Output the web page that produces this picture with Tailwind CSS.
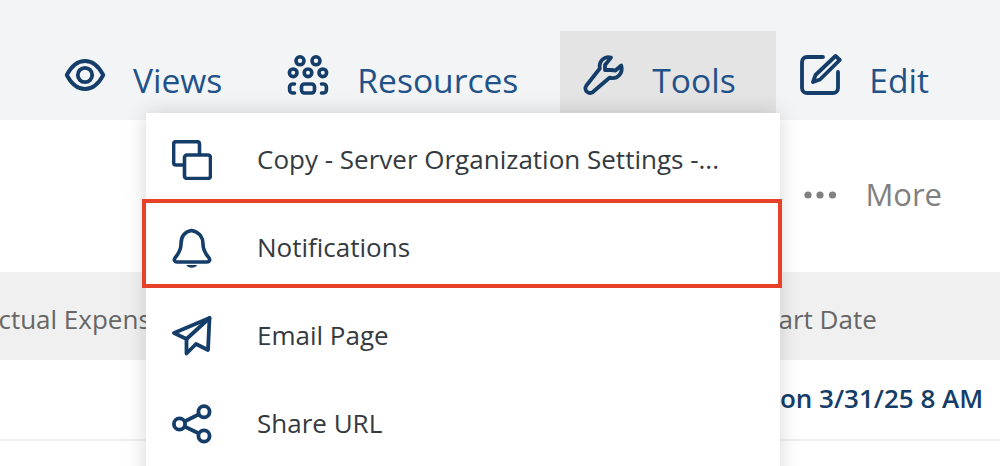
<!DOCTYPE html>
<html lang="en">
<head>
  <meta charset="UTF-8" />
  <title>Tools menu</title>
  <script src="https://cdn.jsdelivr.net/npm/@tailwindcss/browser@4"></script>
</head>
<body class="bg-white overflow-hidden font-['Open_Sans','Noto_Sans',sans-serif]">
  <div class="relative w-[1000px] h-[466px] overflow-hidden">
    <!-- top nav -->
    <nav class="h-[120px] bg-[#f3f4f6] flex justify-end pr-[29px] pt-[31px] text-[33.6px] text-[#1f5288]">
      <a class="h-[89px] pl-6 pr-[42px] flex items-start gap-[28px]">
        <svg class="w-10 h-10 mt-6 shrink-0 overflow-visible" viewBox="0 0 40 40" fill="none" stroke="#153d69" stroke-width="3.8" stroke-linejoin="round">
          <path d="M1.7 20C7 10 13 6 20 6C27 6 33 10 38.3 20C33 30 27 34 20 34C13 34 7 30 1.7 20Z" />
          <circle cx="20" cy="20" r="7.2" />
        </svg>
        <span class="leading-[40px] mt-[29px]">Views</span>
      </a>
      <a class="h-[89px] pl-6 pr-[42px] flex items-start gap-[29px]">
        <svg class="w-10 h-10 mt-6 shrink-0 overflow-visible" viewBox="0 0 40 40" fill="none" stroke="#153d69" stroke-width="3.6" stroke-linecap="round">
          <circle cx="12" cy="5.8" r="4" />
          <circle cx="28" cy="5.8" r="4" />
          <circle cx="5.2" cy="17.8" r="3.8" />
          <circle cx="20" cy="17.8" r="3.8" />
          <circle cx="34.8" cy="17.8" r="3.8" />
          <rect x="13.5" y="29" width="13" height="9" rx="3" />
          <path d="M6.5 29H4.5A3 3 0 0 0 1.6 32V35A3 3 0 0 0 4.5 38H6.5" />
          <path d="M33.5 29H35.5A3 3 0 0 1 38.4 32V35A3 3 0 0 1 35.5 38H33.5" />
        </svg>
        <span class="leading-[40px] mt-[29px]">Resources</span>
      </a>
      <a class="h-[89px] w-[216px] pl-6 bg-[#e4e4e4] flex items-start gap-[28px]">
        <svg class="w-10 h-10 mt-6 shrink-0 overflow-visible" viewBox="0 0 40 40" fill="none" stroke="#153d69" stroke-width="3.8" stroke-linecap="round" stroke-linejoin="round">
          <path d="M27 15H21V10L27 2.6C21 0.6 14.5 5.5 15.8 13.5L2.6 30.2C0.6 33 1.3 35.8 3.5 37.2C5.7 38.5 8.3 38.2 10 36L25.5 22.7C33.5 25 39.5 18 37.2 10.5L31.5 15.5Z" />
        </svg>
        <span class="leading-[40px] mt-[29px]">Tools</span>
      </a>
      <a class="h-[89px] pl-6 pr-[42px] flex items-start gap-[29px]">
        <svg class="w-10 h-10 mt-6 shrink-0 overflow-visible" viewBox="0 0 40 40" fill="none" stroke="#153d69" stroke-width="3.8" stroke-linecap="round" stroke-linejoin="round">
          <path d="M23 2H7A5 5 0 0 0 2 7V33A5 5 0 0 0 7 38H33A5 5 0 0 0 38 33V17" />
          <path d="M13 27L15.5 20L35.5 1L39.8 5L20 24.5Z" />
        </svg>
        <span class="leading-[40px] mt-[29px]">Edit</span>
      </a>
    </nav>

    <!-- toolbar under the nav -->
    <div class="h-[152px] flex justify-end items-start pt-[54px] pr-[58px] gap-[23px] text-[31px] text-[#808080]">
      <svg class="w-[38px] h-10 mt-px shrink-0" viewBox="0 0 38 40" fill="#808080">
        <circle cx="16" cy="20" r="3.6" />
        <circle cx="28.5" cy="20" r="3.6" />
        <circle cx="4" cy="20" r="3.6" />
      </svg>
      <span class="leading-[40px]">More</span>
    </div>

    <!-- table behind the menu -->
    <div class="grid grid-cols-[755px_1fr] h-[88px] items-center bg-[#f0f0f0] text-[26px] text-[#666666]">
      <span class="-ml-[18px] mt-[7px] whitespace-nowrap">Actual Expenses</span>
      <span class="mt-[7px]">Start Date</span>
    </div>
    <div class="grid grid-cols-[756px_1fr] h-[81px] items-center border-b-2 border-[#efefef] text-[26px] font-semibold text-[#153d69]">
      <span></span>
      <span class="-mt-[2px] whitespace-nowrap">Mon 3/31/25 8 AM</span>
    </div>

    <!-- dropdown -->
    <div class="absolute left-[146px] top-[113px] w-[634px] h-[400px] bg-white shadow-[0_0_20px_rgba(0,0,0,0.16)] pt-[3px] text-[26px] text-[#343a40]">
      <div class="h-[88px] flex items-center pl-[26px] gap-[45px]">
        <svg class="w-10 h-10 shrink-0" viewBox="0 0 40 40" fill="none" stroke="#153d69" stroke-width="3.6" stroke-linejoin="round">
          <path d="M12 25H4A2.5 2.5 0 0 1 1.6 22.5V4A2.5 2.5 0 0 1 4 1.6H25A2.5 2.5 0 0 1 27.5 4V15" />
          <rect x="12.5" y="15" width="26" height="23.5" rx="2.5" />
        </svg>
        <span class="-mt-[2px]">Copy - Server Organization Settings -...</span>
      </div>
      <div class="h-[88px] flex items-center pl-[26px] gap-[45px]">
        <svg class="w-10 h-10 shrink-0" viewBox="0 0 40 40" fill="none" stroke="#153d69" stroke-width="3.6" stroke-linejoin="round">
          <path d="M19.5 2.5C11 4 9 10 9 16C9 23 6 26 3 30C1.6 32 2.6 34 5 34H35C37.4 34 38.4 32 37 30C34 26 31 23 31 16C31 10 28 4 19.5 2.5Z" />
          <path d="M14.5 37H25C24 40.5 15.5 40.5 14.5 37Z" fill="#153d69" stroke="none" />
        </svg>
        <span class="-mt-[2px]">Notifications</span>
      </div>
      <div class="h-[88px] flex items-center pl-[26px] gap-[45px]">
        <svg class="w-10 h-10 shrink-0" viewBox="0 0 40 40" fill="none" stroke="#153d69" stroke-width="3.8" stroke-linejoin="round" stroke-linecap="round">
          <path d="M37.5 2L2 17L14.5 23V37.5L24 28L36 34Z" />
          <path d="M14.5 23L37.5 2" />
        </svg>
        <span class="-mt-[2px]">Email Page</span>
      </div>
      <div class="h-[88px] flex items-center pl-[26px] gap-[45px]">
        <svg class="w-10 h-10 shrink-0" viewBox="0 0 40 40" fill="none" stroke="#153d69" stroke-width="3.8">
          <circle cx="7.5" cy="20" r="5.6" />
          <circle cx="32" cy="7.8" r="5.6" />
          <circle cx="32" cy="32" r="5.6" />
          <path d="M12.5 17.5L27 10.3M12.5 22.5L27 29.5" />
        </svg>
        <span class="-mt-[2px]">Share URL</span>
      </div>
      <!-- red callout on Notifications -->
      <div class="absolute left-[-4px] top-[86px] w-[640px] h-[89px] border-4 border-[#e8412a]"></div>
    </div>
  </div>
</body>
</html>
